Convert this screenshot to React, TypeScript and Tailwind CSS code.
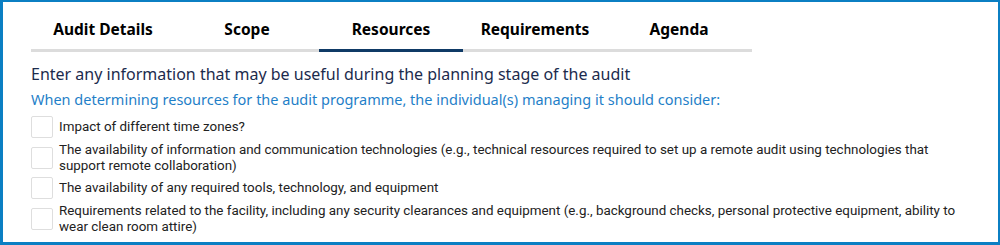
import { useState } from 'react';

const tabs = ['Audit Details', 'Scope', 'Resources', 'Requirements', 'Agenda'];

const items = [
  'Impact of different time zones?',
  'The availability of information and communication technologies (e.g., technical resources required to set up a remote audit using technologies that support remote collaboration)',
  'The availability of any required tools, technology, and equipment',
  'Requirements related to the facility, including any security clearances and equipment (e.g., background checks, personal protective equipment, ability to wear clean room attire)',
];

export default function App() {
  const [active, setActive] = useState('Resources');
  const [checked, setChecked] = useState<boolean[]>(items.map(() => false));

  return (
    <div className="h-[245px] w-[1000px] overflow-hidden border-t-2 border-r-2 border-b-[3px] border-l-[3px] border-[#0b7fc3] bg-white">
      {/* Tabs */}
      <div className="ml-[28px] mt-[6px] flex w-[721px] border-b-[3px] border-[#dcdcdc]" style={{ fontFamily: '"Noto Sans", "Open Sans", sans-serif' }}>
        {tabs.map(t => (
          <button
            key={t}
            onClick={() => setActive(t)}
            className={`-mb-[3px] flex h-[44px] w-[144px] items-center justify-center border-b-[3px] pt-[2px] text-[15.5px] font-bold text-black ${
              active === t ? 'border-[#0f3a66]' : 'border-transparent'
            }`}
          >
            {t}
          </button>
        ))}
      </div>

      <div className="pl-[28px] pr-[34px]">
        <p className="mt-[11px] text-[16px] leading-[22px] text-[#1c2b4d]" style={{ fontFamily: '"Noto Sans", "Open Sans", sans-serif' }}>
          Enter any information that may be useful during the planning stage of the audit
        </p>
        <p className="mt-[4px] text-[14.5px] leading-[20px] text-[#1f7fc8]" style={{ fontFamily: '"Noto Sans", "Open Sans", sans-serif' }}>
          When determining resources for the audit programme, the individual(s) managing it should consider:
        </p>

        <div className="mt-[7px] flex flex-col gap-[4px]" style={{ fontFamily: 'Roboto, "Liberation Sans", sans-serif' }}>
          {items.map((text, i) => (
            <label key={i} className="flex items-center gap-[6px] text-[13.4px] leading-[15.5px] text-[#222]">
              <input
                type="checkbox"
                checked={checked[i]}
                onChange={() => setChecked(c => c.map((v, j) => (j === i ? !v : v)))}
                className="sr-only"
              />
              <span className="h-[22px] w-[22px] shrink-0 rounded-[2px] border border-[#dedede] bg-white" />
              <span>{text}</span>
            </label>
          ))}
        </div>
      </div>
    </div>
  );
}
